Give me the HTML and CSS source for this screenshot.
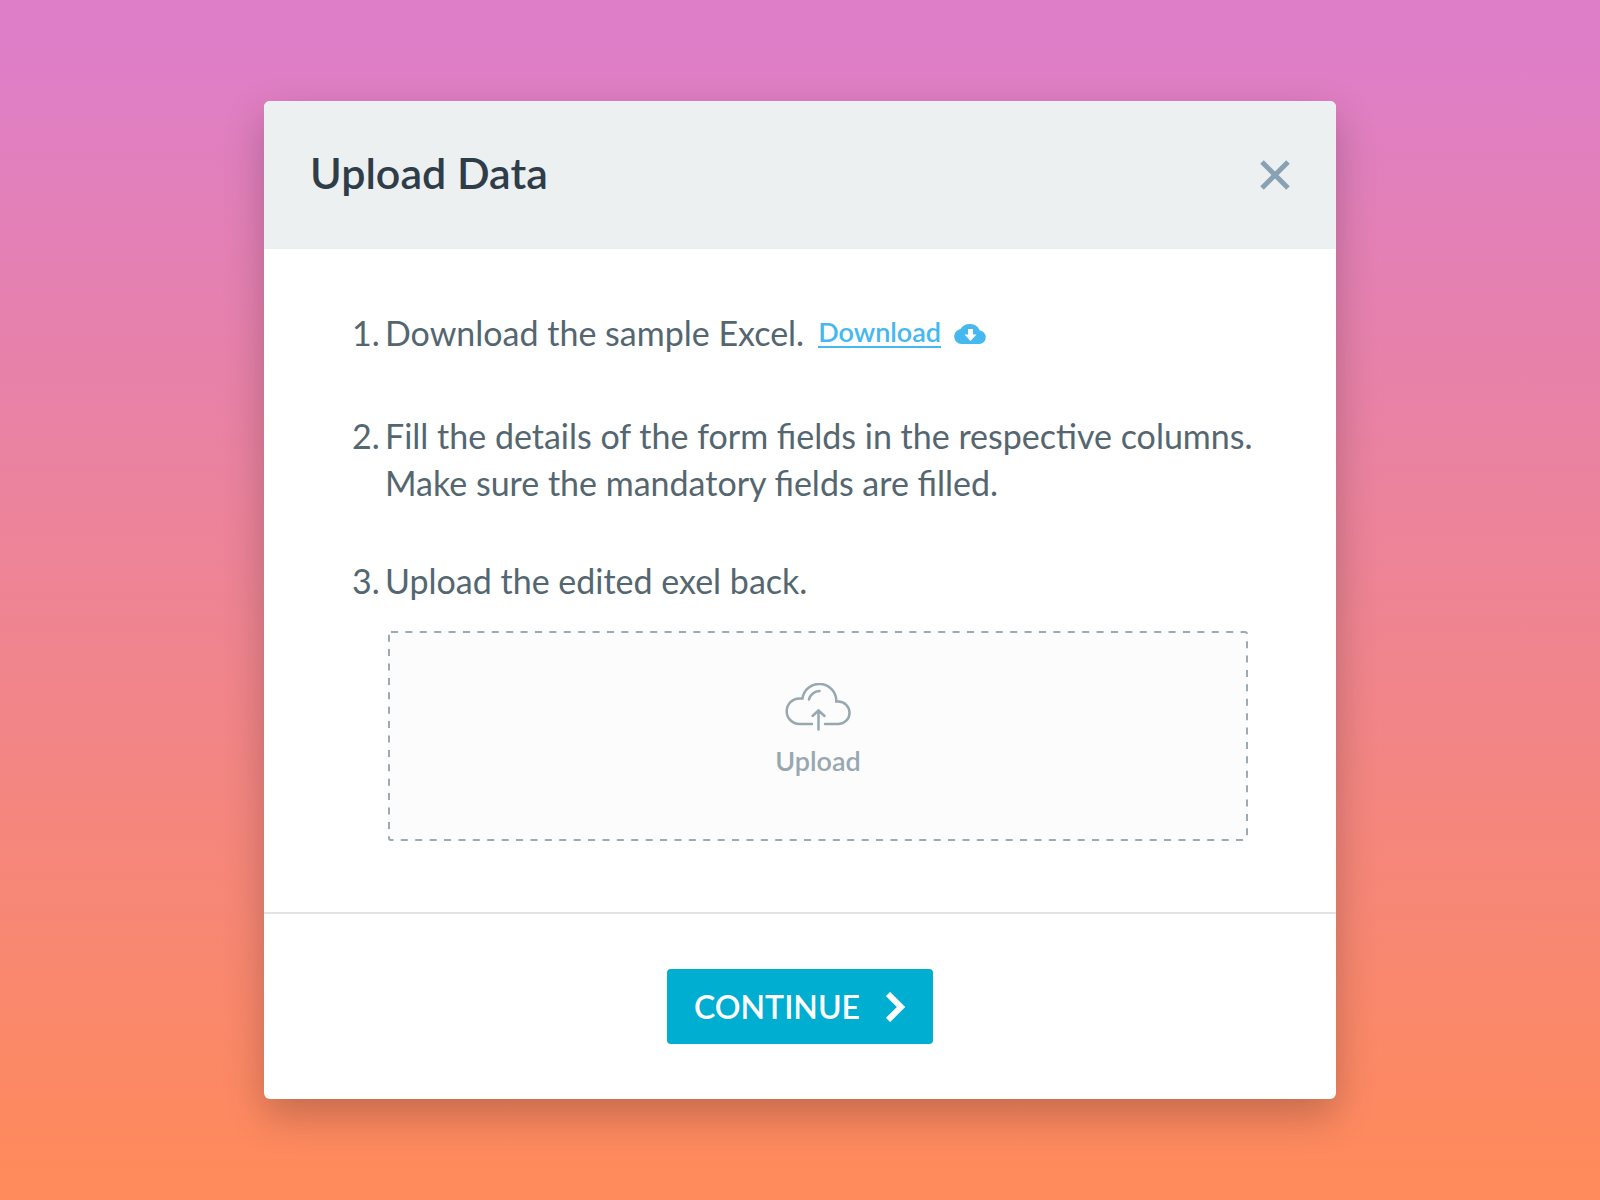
FILE: index.html
```html
<!DOCTYPE html>
<html lang="en">
    <head>
        <meta charset="UTF-8" />
        <meta name="viewport" content="width=device-width, initial-scale=1.0" />
        <title>Upload Data</title>
        <link rel="stylesheet" href="styles.css">
    </head>
    <body>
        <main class="modal" role="dialog" aria-labelledby="modal-title">
            <header class="modal-header">
                <h1 id="modal-title">Upload Data</h1>
                <button class="close" type="button" aria-label="Close">
                    <svg width="30" height="30" viewBox="0 0 30 30">
                        <path d="M2 2L28 28M28 2L2 28" stroke="currentColor" stroke-width="5" />
                    </svg>
                </button>
            </header>

            <div class="modal-body">
                <div class="step step-download">
                    <span class="number">1.</span>
                    <p>Download the sample Excel.</p>
                    <a href="#" class="download">
                        <span>Download</span>
                        <svg width="33" height="22" viewBox="0 0 33 22">
                            <path d="M7.500 22A7.500 7.500 0 0 1 6.500 7.100A11 11 0 0 1 25.800 8.500A6.800 6.800 0 0 1 25.800 22Z" fill="currentColor" />
                            <path d="M14 7H19V12.500H22.500L16.500 19L10.500 12.500H14Z" fill="#fff" />
                        </svg>
                    </a>
                </div>

                <div class="step">
                    <span class="number">2.</span>
                    <p>
                        Fill the details of the form fields in the respective columns.<br />
                        Make sure the mandatory fields are filled.
                    </p>
                </div>

                <div class="step step-upload">
                    <span class="number">3.</span>
                    <p>Upload the edited exel back.</p>
                </div>
                <label class="dropzone" for="file">
                    <svg class="dashes" width="100%" height="100%">
                        <rect x="1" y="1" width="100%" height="100%" rx="2" />
                    </svg>
                    <svg width="66" height="48" viewBox="0 0 66 48" fill="none" stroke="currentColor" stroke-width="2.500" stroke-linecap="round">
                        <path d="M27 41H14.500A12.800 12.800 0 0 1 14.500 15.400H17.500A17 17 0 0 1 51.300 18.500H53.300A11.250 11.250 0 0 1 53.300 41H40" />
                        <path d="M24 16.500A11 11 0 0 1 34.500 8" />
                        <path d="M33.500 46.500V28M27.500 33L33.500 27.500L39.500 33" />
                    </svg>
                    <span>Upload</span>
                    <input type="file" id="file" />
                </label>
            </div>

            <footer class="modal-footer">
                <button class="continue" type="button">
                    <span>CONTINUE</span>
                    <svg width="20" height="30" viewBox="0 0 20 30">
                        <path d="M2 2L15 15L2 28" fill="none" stroke="currentColor" stroke-width="6" />
                    </svg>
                </button>
            </footer>
        </main>
    </body>
</html>
```
FILE: styles.css
```css
* {
    box-sizing: border-box;
}
body {
    margin: 0;
    min-height: 100vh;
    display: flex;
    align-items: center;
    justify-content: center;
    background: linear-gradient(#de7ec8 4%, #ff8a5b 98%);
    color: #54666f;
    font-family: Lato, "Open Sans", sans-serif;
    font-size: 34px;
    line-height: 47px;
}
h1,
p {
    margin: 0;
}
button {
    border: 0;
    font: inherit;
    cursor: pointer;
}
.modal {
    width: 67%;
    background: white;
    border-radius: 6px;
    box-shadow: 0 16px 40px rgba(0, 0, 0, 0.23);
}
.modal-header {
    display: flex;
    align-items: center;
    justify-content: space-between;
    padding: 48px 46px;
    background: #ecf0f1;
    border-radius: 6px 6px 0 0;
}
h1 {
    padding-bottom: 4px;
    color: #2f3d49;
    font-size: 43px;
    font-weight: 600;
    line-height: 48px;
}
.close {
    display: flex;
    padding: 0;
    background: none;
    color: #88a2b4;
}
.modal-body {
    padding: 60px 80px 71px 88px;
    border-bottom: 2px solid #dfe3e5;
}
.step {
    display: flex;
    margin-bottom: 51px;
}
.step-download {
    align-items: center;
    margin-bottom: 56px;
}
.step-upload {
    margin-bottom: 27px;
}
.number {
    flex: none;
    width: 33px;
}
.download {
    display: flex;
    align-items: center;
    gap: 13px;
    margin-left: 14px;
    color: #46b8f0;
    font-size: 27px;
    font-weight: 600;
    line-height: 28px;
    text-decoration: none;
}
.download span {
    border-bottom: 2px solid;
}
.dropzone {
    position: relative;
    display: flex;
    flex-direction: column;
    align-items: center;
    gap: 6px;
    margin: 0 8px 0 36px;
    padding: 52px 0 57px;
    background: #fcfcfc;
    color: #98a8b1;
    font-size: 27px;
    font-weight: 600;
    cursor: pointer;
}
.dropzone input {
    position: absolute;
    opacity: 0;
}
.dashes {
    position: absolute;
    inset: 0;
}
.dashes rect {
    width: calc(100% - 2px);
    height: calc(100% - 2px);
    fill: none;
    stroke: #9cabb3;
    stroke-width: 2px;
    stroke-dasharray: 7 7.400;
}
.modal-footer {
    display: flex;
    justify-content: center;
    padding: 55px;
}
.continue {
    display: flex;
    align-items: center;
    gap: 26px;
    padding: 14px 27px;
    background: #00aed1;
    border-radius: 4px;
    color: white;
    font-size: 32px;
    font-weight: 600;
}
```
